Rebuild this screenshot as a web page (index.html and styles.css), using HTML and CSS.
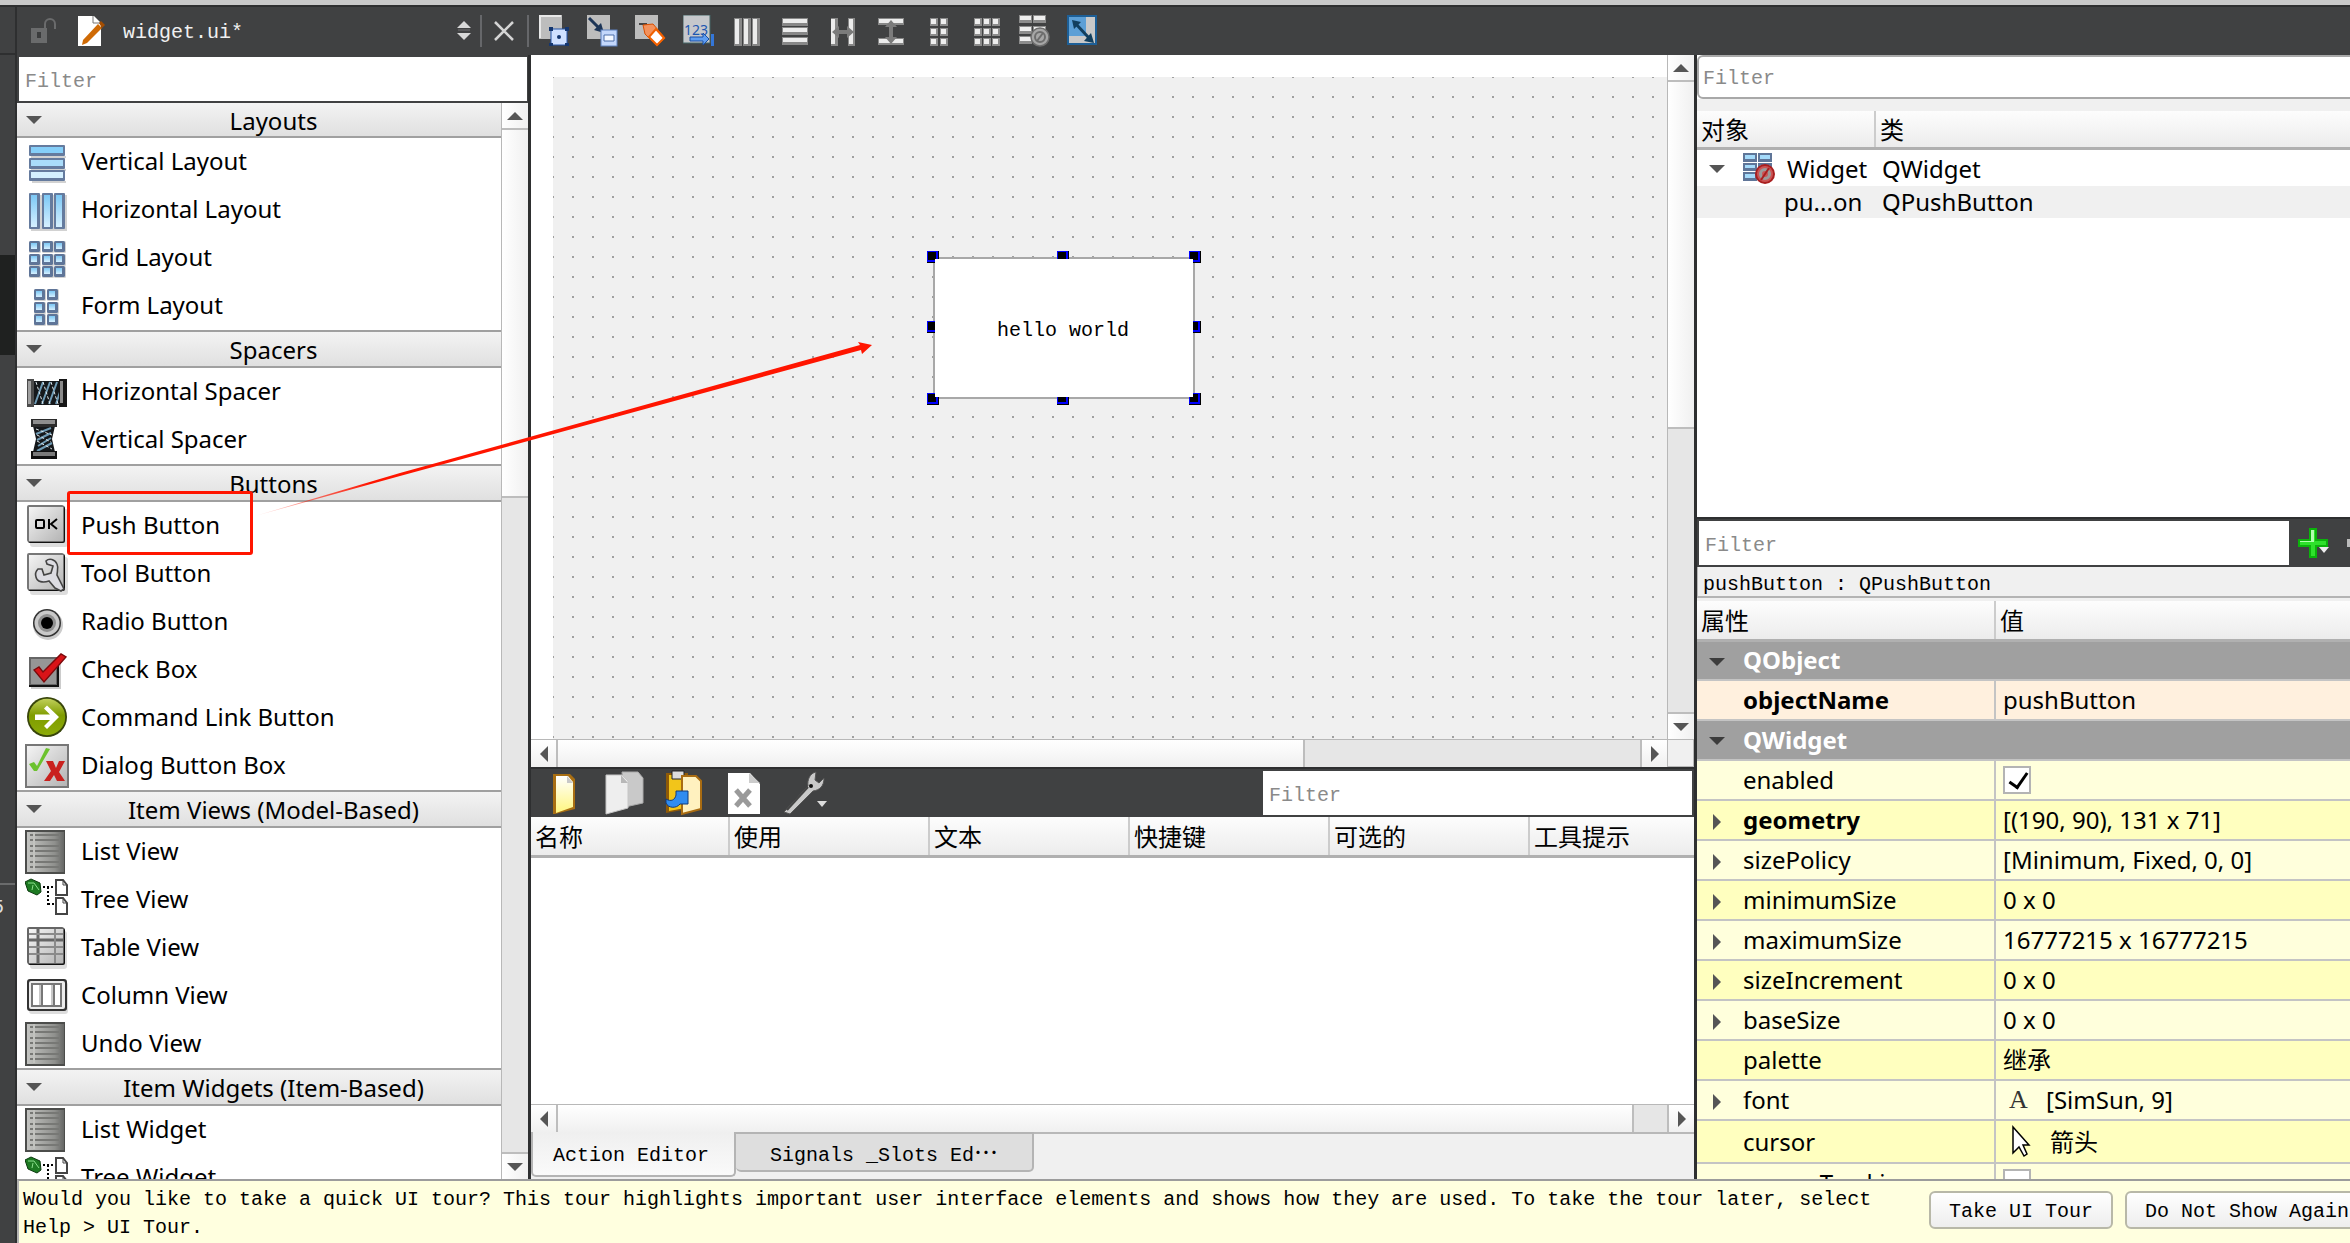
FILE: index.html
```html
<!DOCTYPE html>
<html lang="zh-CN">
<head>
<meta charset="utf-8">
<title>widget.ui</title>
<link rel="stylesheet" href="styles.css">
</head>
<body>
<svg width="0" height="0" class="defs" aria-hidden="true">
  <defs>
    <linearGradient id="blueV" x1="0" y1="0" x2="0" y2="1"><stop offset="0" stop-color="#7cc8f5"/><stop offset="1" stop-color="#d6f0ff"/></linearGradient>
    <linearGradient id="greyD" x1="0" y1="0" x2="1" y2="1"><stop offset="0" stop-color="#f4f4f4"/><stop offset="1" stop-color="#b4b4b4"/></linearGradient>
    <linearGradient id="greyL" x1="0" y1="0" x2="1" y2="0"><stop offset="0" stop-color="#c4c5c2"/><stop offset=".75" stop-color="#8f908d"/><stop offset="1" stop-color="#666765"/></linearGradient>
    <linearGradient id="green" x1="0" y1="0" x2="0" y2="1"><stop offset="0" stop-color="#c0cf5a"/><stop offset=".45" stop-color="#7f9c00"/><stop offset="1" stop-color="#8cab08"/></linearGradient>
    <linearGradient id="paper" x1="0" y1="0" x2="0" y2="1"><stop offset="0" stop-color="#ffffff"/><stop offset="1" stop-color="#fff67e"/></linearGradient>
    <linearGradient id="fade" gradientUnits="userSpaceOnUse" x1="255" y1="516" x2="370" y2="484"><stop offset="0" stop-color="#ff1500" stop-opacity=".1"/><stop offset="1" stop-color="#ff1500"/></linearGradient>
    <g id="cell"><rect width="12" height="12" rx="1.5" fill="#d2d2d2"/><rect width="11" height="11" rx="1.5" fill="#5f7598"/><rect x="2" y="2" width="6" height="6" fill="url(#blueV)"/></g>
    <symbol id="i-vlay" viewBox="0 0 44 44">
      <path d="M6 16h35v2H6zM6 29h35v2H6zM7 41h34v2H7z" fill="#d2d2d2"/>
      <g fill="#657b9e"><rect x="4" y="5" width="36" height="11" rx="1"/><rect x="4" y="18" width="36" height="11" rx="1"/><rect x="4" y="30" width="36" height="11" rx="1"/></g>
      <rect x="6" y="7" width="32" height="6" fill="#86cff9"/><rect x="6" y="20" width="32" height="6" fill="#aadcfa"/><rect x="6" y="32" width="32" height="6" fill="#d4f0ff"/>
    </symbol>
    <symbol id="i-hlay" viewBox="0 0 44 44">
      <path d="M6 7h36v36H6z" fill="#d2d2d2"/>
      <g fill="#657b9e"><rect x="4" y="5" width="11" height="36" rx="1"/><rect x="17" y="5" width="11" height="36" rx="1"/><rect x="29" y="5" width="11" height="36" rx="1"/></g>
      <g fill="url(#blueV)"><rect x="6" y="7" width="6" height="32"/><rect x="19" y="7" width="6" height="32"/><rect x="31" y="7" width="6" height="32"/></g>
    </symbol>
    <symbol id="i-grid" viewBox="0 0 44 44">
      <g id="col3"><use href="#cell" x="4" y="5"/><use href="#cell" x="4" y="18"/><use href="#cell" x="4" y="30"/></g>
      <use href="#col3" x="13"/><use href="#col3" x="25"/>
    </symbol>
    <symbol id="i-form" viewBox="0 0 44 44"><use href="#col3" x="5"/><use href="#col3" x="18"/></symbol>
    <symbol id="i-hsp" viewBox="0 0 44 44">
      <rect x="8" y="11" width="28" height="24" fill="#15181b"/>
      <path d="M10 34l8-22M17 34l8-22M24 34l8-22M31 34l4-12" stroke="#6f9bb5" stroke-width="2"/><path d="M11 12l7 22M18 12l7 22M26 12l7 22" stroke="#dfe9ee" stroke-width="1" stroke-dasharray="3 2"/>
      <rect x="2" y="9" width="7" height="28" fill="#4c4c4c"/><rect x="3" y="11" width="3" height="23" fill="#a0a0a0"/><rect x="34" y="9" width="8" height="28" fill="#161616"/><rect x="35" y="11" width="3" height="22" fill="#8a8a8a"/>
    </symbol>
    <symbol id="i-vsp" viewBox="0 0 44 44">
      <path d="M8 8h22l-3 13 3 13H8l3-13z" fill="#15181b"/>
      <path d="M11 16l15-6M12 22l14-7M13 28l13-8M12 33l15-8" stroke="#6f9bb5" stroke-width="2"/><path d="M11 11l16 6M12 17l14 7M12 23l15 8" stroke="#dfe9ee" stroke-width="1" stroke-dasharray="3 2"/>
      <rect x="6" y="1" width="26" height="8" fill="#2b2b2b"/><rect x="8" y="2" width="22" height="4" fill="#8e8e8e"/><rect x="6" y="33" width="26" height="8" fill="#111"/><rect x="8" y="34" width="22" height="4" fill="#7a7a7a"/>
    </symbol>
    <symbol id="i-push" viewBox="0 0 44 44">
      <rect x="5" y="5" width="38" height="38" rx="3" fill="#ddd"/><rect x="3" y="2" width="37" height="37" rx="2" fill="#111"/><rect x="2" y="1" width="37" height="37" rx="2" fill="#777"/><rect x="4" y="3" width="34" height="34" fill="url(#greyD)"/>
      <g fill="none" stroke="#000" stroke-width="2"><rect x="11" y="16" width="8" height="8" rx="1"/><path d="M24 15v10M32 15l-6 5 6 5"/></g>
    </symbol>
    <symbol id="i-tool" viewBox="0 0 44 44">
      <rect x="5" y="5" width="38" height="38" rx="3" fill="#ddd"/><rect x="3" y="2" width="37" height="37" rx="2" fill="#111"/><rect x="2" y="1" width="37" height="37" rx="2" fill="#777"/><rect x="4" y="3" width="34" height="34" fill="url(#greyD)"/>
      <path d="M21 9c3-3 9-2 11 3 2 4 0 8 0 11l7 14-3 2-6-3-6-7c-6 2-12 1-13-4-1-3 0-6 2-8l4 0 2 6 7-2 2-7-6-2z" fill="#dcdce2" stroke="#444" stroke-width="1.6"/>
    </symbol>
    <symbol id="i-radio" viewBox="0 0 44 44">
      <circle cx="23" cy="25" r="15" fill="#ccc"/><circle cx="22" cy="23" r="14" fill="#333"/><circle cx="22" cy="23" r="12.5" fill="#c9c9c9"/><circle cx="22" cy="23" r="9" fill="#8f8f8f"/><circle cx="22" cy="23" r="6" fill="#000"/>
    </symbol>
    <symbol id="i-check" viewBox="0 0 44 44">
      <rect x="6" y="11" width="30" height="30" fill="#ccc"/><rect x="4" y="9" width="30" height="30" fill="#111"/><rect x="4" y="9" width="28" height="28" fill="#666"/><rect x="6" y="11" width="25" height="25" fill="#969696"/>
      <path d="M9 22l5-3 4 5L36 6l5 3-22 25z" fill="#d91418" stroke="#7b0a0c" stroke-width="1.4"/>
    </symbol>
    <symbol id="i-link" viewBox="0 0 44 44">
      <circle cx="22" cy="21" r="20" fill="#38450a"/><circle cx="22" cy="21" r="18.2" fill="url(#green)"/>
      <path d="M10 18.500h15l-6-6 3-3L34 21 22 33l-3-3 6-6H10z" fill="#fff"/>
    </symbol>
    <symbol id="i-dlg" viewBox="0 0 44 44">
      <rect x="0" y="0" width="44" height="44" fill="#777"/><rect x="2" y="2" width="40" height="40" fill="url(#greyD)"/>
      <path d="M4 20l5-2 3 4L21 4l4 1-13 22H9z" fill="#6cc22e"/><path d="M21 17h7l3 7 3-7h6l-6 11 6 9h-8l-3-6-4 6h-6l7-10z" fill="#c9211e"/>
    </symbol>
    <symbol id="i-list" viewBox="0 0 44 44">
      <rect x="0" y="0" width="40" height="44" fill="#4c4d4b"/><rect x="2" y="2" width="37" height="40" fill="url(#greyL)"/>
      <path d="M5 5h29M5 10h29M5 16h29M5 21h29M5 26h29M5 32h29M5 37h29" stroke="#777875" stroke-width="2"/><path d="M9 2v39" stroke="#c2c3bf" stroke-width="2"/>
    </symbol>
    <symbol id="i-tree" viewBox="0 0 44 44">
      <path d="M0 4l6-3 9 4 1 9-4 3-9-4z" fill="#1d7a22" stroke="#0c3b10"/><path d="M3 5l6 0 5 7M7 12l1-5" stroke="#8be08c" fill="none"/>
      <path d="M18 9h12M23 9v18M23 26h7" stroke="#000" stroke-width="2" stroke-dasharray="2 2" fill="none"/>
      <g fill="#fff" stroke="#444" stroke-width="2"><path d="M31 2h7l4 5v10H31z"/><path d="M31 20h7l4 5v11H31z"/></g><path d="M38 2v5h4M38 20v5h4" stroke="#444" fill="none"/>
    </symbol>
    <symbol id="i-table" viewBox="0 0 44 44">
      <rect x="5" y="5" width="37" height="38" rx="3" fill="#ddd"/><rect x="3" y="2" width="37" height="37" rx="2" fill="#111"/><rect x="2" y="1" width="37" height="37" rx="2" fill="#666"/><rect x="4" y="3" width="34" height="34" fill="url(#greyD)"/>
      <path d="M13 2v35M4 14h34" stroke="#666" stroke-width="3"/><path d="M30 3v34M4 8h34M4 21h34M4 28h34" stroke="#8a8a8a" stroke-width="2"/>
    </symbol>
    <symbol id="i-col" viewBox="0 0 44 44">
      <rect x="4" y="8" width="39" height="32" rx="3" fill="#ddd"/><rect x="2" y="5" width="40" height="32" rx="3" fill="#333"/><rect x="4" y="7" width="36" height="28" rx="2" fill="#ececec"/><rect x="6" y="9" width="31" height="24" fill="#777"/><path d="M8 11h6v20H8zM18 11h8v20h-8zM30 11h5v20h-5z" fill="#fff"/><path d="M14 11h2v20h-2zM26 11h2v20h-2z" fill="#c8c8c8"/>
    </symbol>
  </defs>
</svg>

<div class="app">
  <div class="strip"></div>
  <div class="frame">
    <aside class="rail"><div class="rail-top"></div><div class="rail-mode"></div><div class="rail-mid"></div><div class="rail-end"><span>5</span></div></aside>
    <div class="work">
      <header class="toolbar">
        <div class="file">
          <svg class="lock" width="26" height="28" viewBox="0 0 26 28"><path d="M14 13V7a5 5 0 0 1 10 0v5" fill="none" stroke="#6a6b6c" stroke-width="2"/><rect x="0" y="11" width="16" height="15" fill="#6a6b6c"/><path d="M8 15v6" stroke="#3b3c3d" stroke-width="4"/></svg>
          <svg width="28" height="32" viewBox="0 0 28 32"><path d="M0 1h16l7 7v23H0z" fill="#fff"/><path d="M15 1v7h8" fill="none" stroke="#777"/><path d="M5 25L20 9l4 4L9 28l-5 2z" fill="#cf6a05"/><path d="M21 8l2-2 4 4-3 3z" fill="#a44d00"/></svg>
          <select class="file-select" aria-label="Open file"><option>widget.ui*</option></select>
          <svg width="14" height="22" viewBox="0 0 14 22"><path d="M0 8l7-7 7 7z" fill="#d8d8d8"/><path d="M1 10h12" stroke="#707172" stroke-width="1"/><path d="M0 13l7 7 7-7z" fill="#d8d8d8"/></svg>
          <i class="div"></i>
          <button class="ico close" aria-label="Close"><svg width="20" height="20" viewBox="0 0 20 20"><path d="M1 1l18 18M19 1L1 19" stroke="#d4d4d4" stroke-width="2.500"/></svg></button>
          <i class="div"></i>
        </div>
        <div class="tools">
          <button class="ico" aria-label="Edit Widgets"><svg viewBox="0 0 32 32"><rect x="0" y="0" width="23" height="24" fill="#bdbdbd"/><path d="M0 0h22v2H2v21H0z" fill="#e8e8e8"/><rect x="12" y="14" width="16" height="16" fill="#cfe0ff" stroke="#2454a8"/><path d="M10 12h4v4h-4zM26 12h4v4h-4zM10 28h4v3h-4zM26 28h4v3h-4z" fill="#14366f"/><circle cx="20" cy="22" r="2" fill="#14366f"/></svg></button>
          <button class="ico" aria-label="Edit Signals/Slots"><svg viewBox="0 0 32 32"><rect x="0" y="0" width="23" height="24" fill="#bdbdbd"/><path d="M2 3l11 11" stroke="#1d3557" stroke-width="3"/><path d="M17 18l-10-3 7-7z" fill="#1d3557"/><rect x="14" y="15" width="16" height="16" fill="#c3d7fb" stroke="#5c80bd"/><path d="M17 20h10v6H17z" fill="#f4f8ff" stroke="#4a6da8"/></svg></button>
          <button class="ico" aria-label="Edit Buddies"><svg viewBox="0 0 32 32"><rect x="0" y="0" width="23" height="24" fill="#bdbdbd"/><path d="M4 9h8" stroke="#444" stroke-width="2"/><path d="M8 10l10-1 12 14-8 8-12-12z" fill="#f3925d" stroke="#d84e00"/><path d="M21 14l8 9-7 7-8-8z" fill="#fff" stroke="#f06000" stroke-width="2"/></svg></button>
          <button class="ico" aria-label="Edit Tab Order"><svg viewBox="0 0 32 32"><rect x="0" y="0" width="27" height="28" fill="#c6c8cc" stroke="#446666"/><text x="1" y="20" class="num">123</text><path d="M7 22h13v-4l6 6-6 6v-4H7z" fill="#5f9df0" stroke="#1b4fa3"/><rect x="28" y="19" width="3" height="12" fill="#3476d8"/></svg></button>
          <button class="ico" aria-label="Lay Out Horizontally"><svg viewBox="0 0 32 32"><g fill="#888"><path d="M3 3h8v28H3zM12 3h8v28h-8zM21 3h8v28h-8z"/></g><path d="M4 4h4v25H4zM13 4h4v25h-4zM22 4h4v25h-4z" fill="#ececec"/></svg></button>
          <button class="ico" aria-label="Lay Out Vertically"><svg viewBox="0 0 32 32"><path d="M3 3h26v8H3zM3 12h26v8H3zM3 22h26v8H3z" fill="#888"/><path d="M4 4h24v4H4zM4 13h24v4H4zM4 23h24v4H4z" fill="#ececec"/></svg></button>
          <button class="ico" aria-label="Horizontal Splitter"><svg viewBox="0 0 32 32"><path d="M4 3h7v28H4zM21 3h7v28h-7z" fill="#888"/><path d="M4 4h4v25H4zM22 4h4v25h-4z" fill="#ececec"/><path d="M5 17l7-6v4h8v-4l7 6-7 6v-4h-8v4z" fill="#7b7b7b"/></svg></button>
          <button class="ico" aria-label="Vertical Splitter"><svg viewBox="0 0 32 32"><path d="M3 3h26v7H3zM3 23h26v7H3z" fill="#888"/><path d="M4 4h24v4H4zM4 24h24v4H4z" fill="#ececec"/><path d="M16 5l6 7h-4v10h4l-6 7-6-7h4V12h-4z" fill="#7b7b7b"/></svg></button>
          <button class="ico" aria-label="Form Layout"><svg viewBox="0 0 32 32"><path d="M7 3h8v8H7zM17 3h8v8h-8zM7 13h8v8H7zM17 13h8v8h-8zM7 23h8v8H7zM17 23h8v8h-8z" fill="#8c8c8c"/><path d="M8 4h5v5H8zM18 4h5v5h-5zM8 14h5v5H8zM18 14h5v5h-5zM8 24h5v5H8zM18 24h5v5h-5z" fill="#eee"/></svg></button>
          <button class="ico" aria-label="Grid Layout"><svg viewBox="0 0 32 32"><path d="M3 3h8v8H3zM12 3h8v8h-8zM21 3h8v8h-8zM3 13h8v8H3zM12 13h8v8h-8zM21 13h8v8h-8zM3 23h8v8H3zM12 23h8v8h-8zM21 23h8v8h-8z" fill="#8c8c8c"/><path d="M4 4h5v5H4zM13 4h5v5h-5zM22 4h5v5h-5zM4 14h5v5H4zM13 14h5v5h-5zM22 14h5v5h-5zM4 24h5v5H4zM13 24h5v5h-5zM22 24h5v5h-5z" fill="#eee"/></svg></button>
          <button class="ico" aria-label="Break Layout"><svg viewBox="0 0 32 32"><path d="M0 0h13v8H0zM14 0h13v8H14zM0 11h13v8H0zM14 11h13v8H14zM0 21h13v8H0z" fill="#8c8c8c"/><path d="M1 1h11v4H1zM15 1h11v4H15zM1 12h11v4H1zM15 12h11v4H15zM1 22h11v4H1z" fill="#eee"/><circle cx="21" cy="22" r="9" fill="#a6a6a6" stroke="#6d6d6d" stroke-width="1.500"/><circle cx="21" cy="22" r="5" fill="none" stroke="#6d6d6d" stroke-width="2"/><path d="M18 26l6-8" stroke="#6d6d6d" stroke-width="2"/></svg></button>
          <button class="ico" aria-label="Adjust Size"><svg viewBox="0 0 32 32"><rect x="1" y="1" width="28" height="28" fill="#c9c9c9" stroke="#1d5f97" stroke-width="2"/><path d="M2 2h17v19H2z" fill="#5c9fd6"/><path d="M8 8l14 15" stroke="#123f5e" stroke-width="3"/><path d="M5 5l9 2-7 7zM27 28l-10-2 7-8z" fill="#123f5e"/></svg></button>
        </div>
      </header>

      <div class="panels">
        <section class="box">
          <div class="box-filter"><input class="filter" type="text" placeholder="Filter" aria-label="Filter widgets"></div>
          <div class="box-body">
            <div class="box-list">
              <h2 class="cat"><i class="dn"></i><span>Layouts</span></h2>
              <ul><li><svg><use href="#i-vlay"/></svg><span>Vertical Layout</span></li><li><svg><use href="#i-hlay"/></svg><span>Horizontal Layout</span></li><li><svg><use href="#i-grid"/></svg><span>Grid Layout</span></li><li><svg><use href="#i-form"/></svg><span>Form Layout</span></li></ul>
              <h2 class="cat"><i class="dn"></i><span>Spacers</span></h2>
              <ul><li><svg><use href="#i-hsp"/></svg><span>Horizontal Spacer</span></li><li><svg><use href="#i-vsp"/></svg><span>Vertical Spacer</span></li></ul>
              <h2 class="cat"><i class="dn"></i><span>Buttons</span></h2>
              <ul><li class="marked"><svg><use href="#i-push"/></svg><span>Push Button</span></li><li><svg><use href="#i-tool"/></svg><span>Tool Button</span></li><li><svg><use href="#i-radio"/></svg><span>Radio Button</span></li><li><svg><use href="#i-check"/></svg><span>Check Box</span></li><li><svg><use href="#i-link"/></svg><span>Command Link Button</span></li><li><svg><use href="#i-dlg"/></svg><span>Dialog Button Box</span></li></ul>
              <h2 class="cat"><i class="dn"></i><span>Item Views (Model-Based)</span></h2>
              <ul><li><svg><use href="#i-list"/></svg><span>List View</span></li><li><svg><use href="#i-tree"/></svg><span>Tree View</span></li><li><svg><use href="#i-table"/></svg><span>Table View</span></li><li><svg><use href="#i-col"/></svg><span>Column View</span></li><li><svg><use href="#i-list"/></svg><span>Undo View</span></li></ul>
              <h2 class="cat"><i class="dn"></i><span>Item Widgets (Item-Based)</span></h2>
              <ul><li><svg><use href="#i-list"/></svg><span>List Widget</span></li><li><svg><use href="#i-tree"/></svg><span>Tree Widget</span></li></ul>
            </div>
            <div class="sbar v"><b><i class="up"></i></b><div class="track"><div class="thumb t36"></div></div><b class="end"><i class="dn"></i></b></div>
          </div>
        </section>

        <main class="center">
          <div class="designer">
            <div class="canvas">
              <div class="form">
                <div class="sel">
                  <i class="h" style="left:-6px;top:-6px"></i><i class="h" style="left:124px;top:-6px"></i><i class="h" style="left:256px;top:-6px"></i>
                  <i class="h" style="left:-6px;top:64px"></i><i class="h" style="left:256px;top:64px"></i>
                  <i class="h" style="left:-6px;top:136px"></i><i class="h" style="left:124px;top:136px"></i><i class="h" style="left:256px;top:136px"></i>
                  <button class="hello">hello world</button>
                </div>
              </div>
            </div>
            <div class="sbar v"><b><i class="up"></i></b><div class="track"><div class="thumb t55"></div></div><b class="end"><i class="dn"></i></b></div>
            <div class="sbar hz"><b><i class="lf"></i></b><div class="track"><div class="thumb w69"></div></div><b class="end"><i class="rt"></i></b></div>
            <div class="corner"></div>
          </div>
          <section class="actions">
            <div class="act-bar">
              <div class="act-tools">
                <button class="ico" aria-label="New"><svg viewBox="0 0 40 44"><path d="M2 3h17l5 5v30L4 43H2z" fill="#a86e12"/><path d="M5 5h12l5 6v25L5 42z" fill="url(#paper)"/><path d="M16 5v7h6z" fill="#c8c8c8"/></svg></button>
                <button class="ico" aria-label="Copy"><svg viewBox="6 0 40 44"><path d="M17 1h16l5 6v25l-18 4z" fill="#c9c9c9" stroke="#aaa"/><path d="M1 4h16l6 6v27L1 43z" fill="#eee" stroke="#c6c6c6"/><path d="M16 4v8h7z" fill="#b8b8b8"/></svg></button>
                <button class="ico" aria-label="Paste"><svg viewBox="5 0 40 44"><path d="M0 2h22v36L0 42z" fill="#8f5a08"/><path d="M3 4h16v33L3 40z" fill="#f2c51a"/><path d="M6 0h12v8H6z" fill="#ddd" stroke="#222"/><path d="M16 5h14l5 5v28l-19 5z" fill="#fff1bf" stroke="#a96c12" stroke-width="2"/><path d="M0 28c5 3 9 1 10-4V20h12v13h-8c-4 5-12 4-14-1z" fill="#2f8cf0" stroke="#113a7a"/></svg></button>
                <button class="ico" aria-label="Delete"><svg viewBox="5 0 40 44"><path d="M2 2h22l10 11v30H2z" fill="#fff"/><path d="M23 2v10h11z" fill="#ccc"/><path d="M10 19l14 16M24 19L10 35" stroke="#9a9a9a" stroke-width="5"/></svg></button>
                <button class="ico" aria-label="Configure"><svg viewBox="8 0 40 44"><path d="M1 41L25 15c-1-6 2-13 8-14l-1 8 4 3 5-5c0 8-4 12-11 13L7 43z" fill="#c9c9c9" stroke="#555"/><path d="M4 39l21-23" stroke="#444" stroke-width="2"/><circle cx="28" cy="15" r="2" fill="#111"/><path d="M34 30h10l-5 6z" fill="#ddd"/></svg></button>
              </div>
              <input class="filter" type="text" placeholder="Filter" aria-label="Filter actions">
            </div>
            <div class="act-list"><table class="act-table"><thead><tr><th>名称</th><th>使用</th><th>文本</th><th>快捷键</th><th>可选的</th><th>工具提示</th></tr></thead></table></div>
            <div class="sbar hz"><b><i class="lf"></i></b><div class="track"><div class="thumb w97"></div></div><b class="end"><i class="rt"></i></b></div>
            <div class="tabs"><button class="tab on">Action Editor</button><button class="tab">Signals _Slots Ed<span class="dots">⋯</span></button></div>
          </section>
        </main>

        <aside class="side">
          <section class="inspector">
            <input class="filter round" type="text" placeholder="Filter" aria-label="Filter objects">
            <table class="tree">
              <thead><tr><th>对象</th><th>类</th></tr></thead>
              <tbody>
                <tr class="top"><td><div class="cellrow"><i class="dn"></i><svg width="34" height="34" viewBox="0 0 34 34"><path d="M0 1h14v9H0zM15 1h14v9H15zM0 11h14v8H0zM15 11h14v8H15zM0 20h14v9H0z" fill="#5f7598"/><path d="M2 3h10v4H2zM17 3h10v4H17zM2 13h10v3H2zM17 13h10v3H17zM2 22h10v4H2z" fill="#a4dafa"/><circle cx="22" cy="22" r="10" fill="#a91f1f"/><circle cx="22" cy="22" r="8" fill="#cb5555"/><circle cx="22" cy="22" r="4.500" fill="none" stroke="#9b9b9b" stroke-width="3"/><path d="M18 28l8-12" stroke="#a91f1f" stroke-width="2"/></svg><span>Widget</span></div></td><td>QWidget</td></tr>
                <tr class="alt"><td><div class="child">pu...on</div></td><td>QPushButton</td></tr>
              </tbody>
            </table>
          </section>
          <section class="props">
            <div class="prop-bar"><input class="filter" type="text" placeholder="Filter" aria-label="Filter properties"><button class="ico" aria-label="Add"><svg width="32" height="32" viewBox="0 0 32 32"><path d="M11 1h8v11h11v8H19v11h-8V20H0v-8h11z" fill="#0bb30b"/><path d="M13 3h4v11h11v4H17v11h-4V18H2v-4h11z" fill="#2fe02c"/><path d="M13 3h3v12H2v-1h11z" fill="#b4ffb0"/><path d="M21 20h10l-5 6z" fill="#eee"/></svg></button><button class="ico" aria-label="Remove"><svg width="32" height="32" viewBox="0 0 32 32"><path d="M0 12h28v8H0z" fill="#bbb"/></svg></button></div>
            <div class="obj">pushButton : QPushButton</div>
            <div class="prop-view">
              <table class="prop">
                <thead><tr><th>属性</th><th>值</th></tr></thead>
                <tbody>
                  <tr class="grp"><td colspan="2"><i class="dn"></i>QObject</td></tr>
                  <tr class="peach"><td><strong>objectName</strong></td><td>pushButton</td></tr>
                  <tr class="grp"><td colspan="2"><i class="dn"></i>QWidget</td></tr>
                  <tr class="lt"><td><label for="en">enabled</label></td><td><input id="en" type="checkbox" checked></td></tr>
                  <tr class="dk"><td><i class="rt"></i><strong>geometry</strong></td><td>[(190, 90), 131 x 71]</td></tr>
                  <tr class="lt"><td><i class="rt"></i>sizePolicy</td><td>[Minimum, Fixed, 0, 0]</td></tr>
                  <tr class="dk"><td><i class="rt"></i>minimumSize</td><td>0 x 0</td></tr>
                  <tr class="lt"><td><i class="rt"></i>maximumSize</td><td>16777215 x 16777215</td></tr>
                  <tr class="dk"><td><i class="rt"></i>sizeIncrement</td><td>0 x 0</td></tr>
                  <tr class="lt"><td><i class="rt"></i>baseSize</td><td>0 x 0</td></tr>
                  <tr class="dk"><td>palette</td><td>继承</td></tr>
                  <tr class="lt"><td><i class="rt"></i>font</td><td><div class="val"><span class="glyph">A</span><span>[SimSun, 9]</span></div></td></tr>
                  <tr class="dk tall"><td>cursor</td><td><div class="val"><svg width="32" height="34" viewBox="0 0 32 34"><path d="M10 2v26l6-6 5 9 3-2-4-9h6z" fill="#fff" stroke="#000" stroke-width="1.500"/></svg><span>箭头</span></div></td></tr>
                  <tr class="lt"><td><label for="mt">mouseTracking</label></td><td><input id="mt" type="checkbox"></td></tr>
                </tbody>
              </table>
            </div>
          </section>
        </aside>
      </div>

      <footer class="tour">
        <p>Would you like to take a quick UI tour? This tour highlights important user interface elements and shows how they are used. To take the tour later, select Help &gt; UI Tour.</p>
        <div class="tour-btns"><button>Take UI Tour</button><button>Do Not Show Again</button></div>
      </footer>
    </div>
  </div>
  <svg class="arrow" width="900" height="560" viewBox="0 0 900 560" aria-hidden="true"><path d="M255 516L400 473v3z" fill="url(#fade)"/><path d="M400 473L860 345l-2-3 14 3-10 9-1-4L400 476z" fill="#ff1500"/></svg>
</div>
</body>
</html>
```

FILE: styles.css
```css
* { box-sizing: border-box; }
body { margin: 0; background: #404142; color: #000; font-family: "Noto Sans", "Noto Sans CJK SC", sans-serif; font-size: 24px; overflow: hidden; }
button, input, select { font: inherit; color: inherit; }
h2, ul, p { margin: 0; padding: 0; font-weight: 400; list-style: none; }
.defs { position: absolute; }
.app { position: relative; display: flex; flex-direction: column; height: 100vh; overflow: hidden; }
.strip { flex: none; height: 5px; background: #c9c9c9; }
.frame { flex: 1; display: flex; min-height: 0; }
.rail { flex: none; width: 17px; display: flex; flex-direction: column; border-right: 2px solid #2e2f30; border-top: 2px solid #2e2f30; }
.rail-top { height: 48px; border-bottom: 2px solid #2e2f30; }
.rail-mode { height: 300px; border-top: 200px solid #404142; background: #1f2120; }
.rail-mid { height: 528px; }
.rail-end { border-top: 2px solid #6a6b6c; color: #ddd; font: 20px/46px "Liberation Mono", monospace; flex: 1; overflow: hidden; direction: rtl; }
.rail-end span { display: block; width: 4px; overflow: hidden; margin-right: 11px; }
.work { flex: 1; min-width: 0; display: flex; flex-direction: column; }

.toolbar { flex: none; height: 50px; display: flex; align-items: center; background: #404142; border-top: 2px solid #2e2f30; }
.file { width: 512px; display: flex; align-items: center; padding-left: 14px; }
.file .lock { margin-right: 21px; }
.file-select { appearance: none; flex: 1; margin-left: 17px; padding: 3px 0 0; border: 0; background: none; color: #f0f0f0; font: 20px "Liberation Mono", monospace; }
.div { width: 2px; height: 32px; background: #66676a; }
.file .div { margin-left: 9px; }
.file .close { margin-left: 12px; margin-right: 4px; width: 20px; }
.ico { border: 0; padding: 0; background: none; display: flex; flex: none; }
.tools { display: flex; gap: 16px; padding-left: 10px; }
.tools svg { width: 32px; height: 32px; }
.num { font: 14px "Noto Sans", sans-serif; fill: #1c56b0; }

.panels { flex: 1; min-height: 0; display: grid; grid-template-columns: 514px minmax(0, 1fr) 656px; grid-template-rows: minmax(0, 1fr); }
.filter { width: 100%; height: 44px; border: 0; border-radius: 0; background: #fff; padding: 4px 6px 0; font: 20px "Liberation Mono", monospace; outline: 0; }
.filter::placeholder { color: #8a8a8a; opacity: 1; }

.box { display: flex; flex-direction: column; border-right: 3px solid #2e2f30; background: #404142; min-height: 0; }
.box-filter { padding: 2px 1px 2px 2px; }
.box-body { flex: 1; min-height: 0; display: flex; background: #fff; }
.box-list { flex: 1; overflow: hidden; }
.cat { height: 38px; display: flex; align-items: center; padding-left: 9px; border: 2px solid #a0a0a0; border-width: 2px 0; background: linear-gradient(#f3f3f3, #e0e0e0); font-size: 24px; }
.cat:first-child { height: 35px; border-top: 0; }
.cat span { flex: 1; text-align: center; padding: 2px 0 0 4px; line-height: 32px; }
.box-list li { display: flex; align-items: center; gap: 12px; height: 48px; padding-left: 8px; }
.box-list li span { padding-bottom: 3px; }
.box-list svg { width: 44px; height: 44px; overflow: visible; }
.marked { position: relative; }
.marked::after { content: ""; position: absolute; left: 50px; top: -11px; width: 180px; height: 58px; border: 3px solid #ff1500; border-radius: 3px; z-index: 2; }

.dn, .up, .lf, .rt { flex: none; width: 0; height: 0; border: 8px solid transparent; }
.dn { border-top-color: #555; border-bottom: 0; }
.up { border-bottom-color: #555; border-top: 0; }
.lf { border-right-color: #555; border-left: 0; }
.rt { border-left-color: #555; border-right: 0; }

.sbar { display: flex; flex: none; background: #f4f4f4; }
.sbar b { flex: none; display: flex; align-items: center; justify-content: center; }
.sbar .track { flex: 1; background: #e6e6e6; }
.sbar.v { width: 27px; flex-direction: column; border-left: 1px solid #b8b8b8; }
.sbar.v b { height: 27px; border-bottom: 2px solid #bdbdbd; background: linear-gradient(90deg, #fff, #f0f0f0); }
.sbar.v .end { border-bottom: 0; border-top: 2px solid #bdbdbd; }
.sbar.v .thumb { border-bottom: 2px solid #bdbdbd; background: linear-gradient(90deg, #fff, #f0f0f0); }
.sbar.hz { height: 28px; border-top: 1px solid #b8b8b8; }
.sbar.hz b { width: 27px; border-right: 2px solid #bdbdbd; background: linear-gradient(#fff, #f0f0f0); }
.sbar.hz .end { border-right: 0; border-left: 2px solid #bdbdbd; }
.sbar.hz .thumb { height: 100%; border-right: 2px solid #bdbdbd; background: linear-gradient(#fff, #f0f0f0); }
.t36 { height: 36%; }
.t55 { height: 55%; }
.w69 { width: 69%; }
.w97 { width: 97%; }

.center { display: flex; flex-direction: column; min-width: 0; }
.designer { flex: 1; min-height: 0; display: grid; grid-template-columns: minmax(0, 1fr) 27px; grid-template-rows: minmax(0, 1fr) 28px; background: #fff; }
.canvas { padding: 22px 0 0 22px; display: flex; }
.form { flex: 1; position: relative; background: #f0f0f0 conic-gradient(from 270deg at 2px 2px, #a0a0a0 90deg, transparent 0) -1px -1px / 20px 20px; }
.sel { position: absolute; left: 380px; top: 180px; width: 262px; height: 142px; border: 2px solid #a8a8a8; }
.sel .h { position: absolute; margin: -2px; width: 12px; height: 12px; background: linear-gradient(#000, #000) 1px 1px / 8px 8px no-repeat #00f; border: solid #000; border-width: 0 1px 1px 0; }
.hello { position: relative; display: block; width: 100%; height: 100%; border: 0; padding: 5px 2px 0 0; background: #fff; font: 20px "Liberation Mono", monospace; }
.corner { background: #f0f0f0; border: 1px solid #b8b8b8; }

.actions { flex: none; display: flex; flex-direction: column; height: 412px; background: #fff; }
.act-bar { flex: none; display: flex; align-items: center; justify-content: space-between; height: 50px; padding: 0 2px 0 20px; background: #404142; border-top: 2px solid #2e2f30; }
.act-tools { display: flex; gap: 20px; }
.act-tools svg { width: 40px; height: 44px; overflow: visible; }
.act-bar .filter { width: 429px; }
.act-list { flex: 1; overflow: hidden; }
table { border-collapse: collapse; table-layout: fixed; width: 100%; }
th { height: 39px; padding: 2px 4px 0; text-align: left; font-weight: 400; line-height: 34px; background: linear-gradient(#fdfdfd, #ececec); border-bottom: 3px solid #b0b0b0; border-right: 2px solid #ccc; }
th:last-child { border-right: 0; }
.act-table th { width: 200px; }
.act-table th:first-child { width: 198px; }
.act-table th:last-child { width: auto; }
.tabs { flex: none; height: 47px; display: flex; align-items: flex-start; background: #f0f0f0; box-shadow: inset 0 2px #b8b8b8; }
.tab { height: 40px; border: 2px solid #b4b4b4; border-left-width: 0; border-radius: 0 0 5px 5px; padding: 4px 34px 0; background: #dedede; font: 20px/28px "Liberation Mono", monospace; width: 298px; white-space: nowrap; text-align: left; }
.tab.on { width: 205px; height: 45px; padding: 4px 20px 0; border-left-width: 2px; border-top: 0; background: linear-gradient(#efefef, #fafafa); }
.dots { font-family: "Noto Sans CJK SC", sans-serif; font-size: 24px; line-height: 1; }

.side { border-left: 3px solid #2e2f30; display: flex; flex-direction: column; min-height: 0; overflow: hidden; background: #f0f0f0; }
.inspector { flex: none; height: 462px; background: #fff; }
.round { display: block; width: calc(100% + 8px); border: 2px solid #a8a8a8; border-radius: 6px; padding: 3px 4px 0; }
.tree { border-top: 12px solid #f0f0f0; }
.tree th:first-child { width: 178px; }
.tree td { height: 32px; padding: 0 0 0 7px; line-height: 32px; white-space: nowrap; }
.tree .top td { height: 36px; padding-top: 2px; }
.tree td:first-child { padding-left: 0; }
.tree .child { padding-left: 87px; }
.alt { background: #f0f0f0; }
.cellrow { display: flex; align-items: center; padding-left: 12px; height: 34px; }
.cellrow svg { margin: 0 10px 0 18px; }

.props { flex: 1; min-height: 0; display: flex; flex-direction: column; }
.prop-bar { flex: none; display: flex; align-items: center; height: 50px; padding-left: 2px; background: #404142; border-top: 2px solid #2e2f30; }
.prop-bar .filter { width: 590px; flex: none; }
.prop-bar .ico { margin-left: 9px; margin-right: 8px; }
.obj { flex: none; height: 31px; padding: 2px 0 0 5px; border-bottom: 2px solid #b4b4b4; border-left: 1px solid #b4b4b4; font: 20px/32px "Liberation Mono", monospace; }
.prop-view { flex: 1; min-height: 0; overflow: hidden; padding-top: 3px; }
.prop th:first-child { width: 298px; }
.prop td { height: 40px; padding: 0 0 0 46px; line-height: 36px; white-space: nowrap; border-bottom: 2px solid #c4c4c4; border-right: 2px solid #c4c4c4; }
.prop td + td { padding-left: 7px; border-right: 0; }
.prop td > i { display: inline-block; margin-left: -34px; margin-right: 18px; vertical-align: middle; }
.prop td > .rt { margin-left: -30px; margin-right: 22px; margin-bottom: 2px; }
.grp td { background: #a0a0a0; color: #fff; font-weight: 700; border-right: 0; }
.grp .dn { border-top-color: #3c3c3c; margin-bottom: 2px; }
.peach { background: #fff0de; }
.lt { background: #ffffdc; }
.dk { background: #ffffbf; }
.prop .tall td { height: 43px; }
.val { display: flex; align-items: center; height: 36px; }
.val svg { margin-right: 15px; }
.glyph { width: 43px; padding-left: 6px; font: 26px "Liberation Serif", serif; color: #333; }
.prop input { appearance: none; display: block; width: 28px; height: 28px; margin: 0; border: 2px solid #b4b4b4; background: #fff; }
.prop input:checked::after { content: ""; display: block; width: 8px; height: 16px; margin: 1px 0 0 8px; border: solid #000; border-width: 0 3px 3px 0; transform: rotate(35deg); }

.tour { flex: none; height: 64px; display: flex; border-top: 2px solid #9c9c9c; border-left: 2px solid #b4b4b4; background: #ffffdf; padding: 5px 0 0 4px; font: 20px/28px "Liberation Mono", monospace; }
.tour p { flex: 1; }
.tour-btns { flex: none; display: flex; gap: 12px; padding: 5px 0 0 12px; margin-right: -19px; }
.tour button { height: 38px; padding: 3px 18px 0; border: 2px solid #b8b8a8; border-radius: 6px; background: linear-gradient(#fff, #eee); white-space: nowrap; }
.arrow { position: absolute; left: 0; top: 0; pointer-events: none; z-index: 3; }
```
